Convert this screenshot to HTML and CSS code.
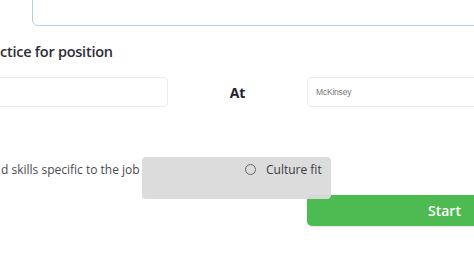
FILE: index.html
```html
<!DOCTYPE html>
<html>
<head>
<meta charset="utf-8">
<link rel="stylesheet" href="styles.css">
</head>
<body>
<div class="page">
  <div class="textarea"></div>
  <h2 class="heading">ctice for position</h2>
  <div class="row">
    <div class="input input-role"></div>
    <div class="at">At</div>
    <div class="input input-company"><span class="placeholder">McKinsey</span></div>
  </div>
  <div class="skills">d skills specific to the job</div>
  <div class="actions">
    <button class="start">Start</button>
  </div>
  <div class="overlay">
    <span class="radio"></span>
    <span class="option">Culture fit</span>
  </div>
</div>
</body>
</html>
```

FILE: styles.css
```css
html, body {
  margin: 0;
  padding: 0;
  background: #ffffff;
}
.page {
  position: relative;
  width: 474px;
  height: 266px;
  overflow: hidden;
  font-family: "Open Sans", sans-serif;
  color: #2b2b33;
  display: flex;
  flex-direction: column;
}
.textarea {
  margin-top: -24px;
  margin-left: 32px;
  width: 520px;
  height: 50px;
  flex: none;
  border: 1.5px solid #b8cdd9;
  border-radius: 6px;
  box-sizing: border-box;
}
.heading {
  margin: 16px 0 0 0;
  font-size: 14.5px;
  font-weight: 600;
  line-height: 20px;
  letter-spacing: -0.25px;
  color: #2e2e36;
  white-space: nowrap;
}
.row {
  display: flex;
  align-items: center;
  margin-top: 15px;
  height: 30px;
}
.input {
  height: 30px;
  box-sizing: border-box;
  border: 1px solid #ececec;
  border-radius: 4px;
  background: #fff;
  flex: none;
}
.input-role {
  margin-left: -40px;
  width: 208px;
}
.at {
  width: 139px;
  text-align: center;
  font-size: 14px;
  font-weight: 700;
  color: #23232e;
  flex: none;
}
.input-company {
  width: 200px;
  display: flex;
  align-items: center;
  padding-left: 8px;
}
.placeholder {
  font-size: 8.5px;
  color: #777;
  font-family: "Liberation Sans", sans-serif;
  letter-spacing: -0.2px;
}
.skills {
  margin: 55px 0 0 1px;
  font-size: 12px;
  line-height: 16px;
  color: #4a4a52;
  white-space: nowrap;
}
.actions {
  margin-top: 17px;
  padding-left: 307px;
}
.start {
  width: 200px;
  height: 31px;
  border: none;
  border-radius: 5px;
  background: #4dbb51;
  color: #fff;
  font-family: "Open Sans", sans-serif;
  font-weight: 600;
  font-size: 14px;
  text-align: left;
  padding: 0 0 0 121px;
  box-shadow: 0 1px 3px rgba(0,0,0,0.12);
}
.overlay {
  position: absolute;
  left: 142px;
  top: 157px;
  width: 189px;
  height: 42px;
  border-radius: 4px;
  background: rgba(218, 218, 218, 0.95);
  display: flex;
  align-items: flex-start;
  padding: 6px 0 0 103px;
  box-sizing: border-box;
}
.radio {
  width: 9px;
  height: 9px;
  border: 1.5px solid #666;
  border-radius: 50%;
  margin-top: 1px;
  flex: none;
}
.option {
  margin-left: 10px;
  font-size: 12px;
  line-height: 13px;
  color: #3a3a42;
}
```
